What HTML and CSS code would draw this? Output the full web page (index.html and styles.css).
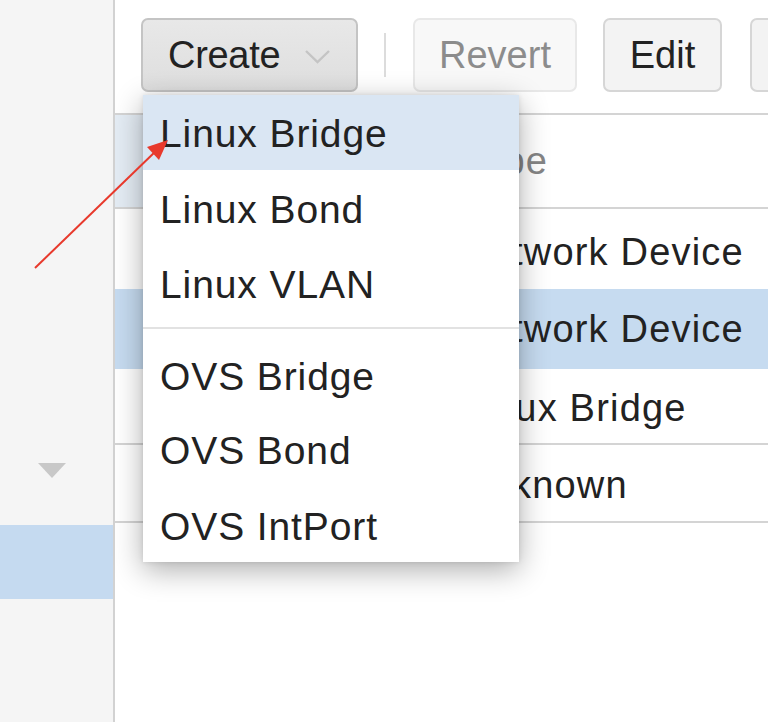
FILE: index.html
```html
<!DOCTYPE html>
<html>
<head>
<meta charset="utf-8">
<link rel="stylesheet" href="styles.css">
</head>
<body>
<div class="app">
  <aside class="sidebar">
    <div class="tri"></div>
    <div class="side-sel"></div>
  </aside>
  <main class="main">
    <div class="toolbar">
      <div class="create-wrap">
        <button class="btn btn-create"><span>Create</span>
          <svg class="chev" width="27" height="16" viewBox="0 0 27 16"><polyline points="2,3 13.5,14 25,3" fill="none" stroke="#c4c4c4" stroke-width="2.4"/></svg>
        </button>
        <div class="menu">
          <div class="item active">Linux Bridge</div>
          <div class="item">Linux Bond</div>
          <div class="item">Linux VLAN</div>
          <div class="sep"></div>
          <div class="item">OVS Bridge</div>
          <div class="item">OVS Bond</div>
          <div class="item last">OVS IntPort</div>
        </div>
      </div>
      <div class="vsep"></div>
      <button class="btn btn-disabled">Revert</button>
      <button class="btn btn-edit">Edit</button>
      <button class="btn btn-more"></button>
    </div>
    <div class="grid">
      <div class="row head">
        <div class="c1 hl"></div>
        <div class="c2">Type</div>
      </div>
      <div class="row r1">
        <div class="c1"></div>
        <div class="c2">Network Device</div>
      </div>
      <div class="row r2 sel">
        <div class="c1"></div>
        <div class="c2">Network Device</div>
      </div>
      <div class="row r3">
        <div class="c1"></div>
        <div class="c2">Linux Bridge</div>
      </div>
      <div class="row r4">
        <div class="c1"></div>
        <div class="c2">Unknown</div>
      </div>
    </div>
  </main>
</div>
<svg class="arrow" width="200" height="300" viewBox="0 0 200 300">
  <line x1="35" y1="268" x2="158" y2="149" stroke="#e8392c" stroke-width="2"/>
  <polygon points="168,140 147,147 159,160" fill="#e8392c"/>
</svg>
</body>
</html>
```

FILE: styles.css
```css
* { box-sizing: border-box; }
html, body { margin: 0; padding: 0; }
body {
  width: 768px;
  height: 722px;
  overflow: hidden;
  background: #fff;
  font-family: "Liberation Sans", "Helvetica Neue", Arial, sans-serif;
  color: #222;
  position: relative;
}
.app { display: flex; height: 722px; }
.sidebar {
  width: 115px;
  flex: none;
  background: #f5f5f5;
  border-right: 2px solid #d2d2d2;
  display: flex;
  flex-direction: column;
}
.tri {
  width: 0; height: 0;
  margin: 463px 0 0 38px;
  border-left: 14px solid transparent;
  border-right: 14px solid transparent;
  border-top: 15px solid #c8c8c8;
}
.side-sel {
  margin-top: 47px;
  height: 74px;
  background: #c5daf0;
}
.main { flex: 1; display: flex; flex-direction: column; min-width: 0; }
.toolbar {
  display: flex;
  padding: 18px 0 0 26px;
  height: 113px;
  align-items: flex-start;
  white-space: nowrap;
  position: relative;
  z-index: 2;
}
.btn {
  font-family: inherit;
  font-size: 38px;
  height: 74px;
  border-radius: 7px;
  padding: 0 26px;
  display: flex;
  align-items: center;
  flex: none;
  margin: 0;
}
.create-wrap { position: relative; flex: none; }
.btn-create {
  width: 217px;
  padding-left: 25px;
  background: linear-gradient(#e8e8e8, #dedede);
  border: 2px solid #c4c4c4;
  color: #222;
  justify-content: flex-start;
  letter-spacing: -0.3px;
}
.chev { margin-left: 24px; margin-top: 2px; flex: none; width: 27px; height: 16px; }
.vsep {
  width: 2px;
  height: 44px;
  background: #dcdcdc;
  margin: 15px 27px 0 26px;
  flex: none;
}
.btn-disabled {
  width: 164px;
  background: #f8f8f8;
  border: 2px solid #e8e8e8;
  color: #8c8c8c;
  justify-content: center;
}
.btn-edit {
  margin-left: 26px;
  width: 119px;
  background: #f3f3f3;
  border: 2px solid #d6d6d6;
  color: #222;
  justify-content: center;
}
.btn-more {
  margin-left: 28px;
  width: 100px;
  background: #f3f3f3;
  border: 2px solid #d6d6d6;
}
.menu {
  position: absolute;
  left: 2px;
  top: 77px;
  width: 376px;
  background: #fff;
  box-shadow: 0 8px 28px rgba(0,0,0,0.32), 0 0 5px rgba(0,0,0,0.1);
  z-index: 50;
}
.item {
  height: 75px;
  font-size: 39px;
  line-height: 80px;
  padding-left: 17px;
  color: #222;
  letter-spacing: 0.9px;
}
.item.active { background: #dae6f3; line-height: 78px; }
.sep + .item, .sep + .item + .item { height: 74px; line-height: 78px; }
.item.last { height: 76px; line-height: 81px; }
.sep {
  height: 18px;
  position: relative;
}
.sep::after {
  content: "";
  position: absolute;
  left: 0; right: 0; top: 7px;
  height: 2px;
  background: #e2e2e2;
}
.grid { border-top: 2px solid #d4d4d4; position: relative; z-index: 1; }
.row {
  display: flex;
  font-size: 38px;
  align-items: center;
  white-space: nowrap;
}
.c1 { width: 346px; flex: none; align-self: stretch; }
.c2 { letter-spacing: 1.2px; }
.head { height: 94px; color: #858585; border-bottom: 2px solid #d4d4d4; }
.hl { background: #e4ecf4; }
.r1 { height: 80px; padding-top: 6px; }
.r2 { height: 80px; }
.r3 { height: 76px; padding-top: 4px; border-bottom: 2px solid #d4d4d4; }
.r4 { height: 78px; padding-top: 5px; border-bottom: 2px solid #d4d4d4; }
.sel { background: #c6dbf0; }
.arrow { position: absolute; left: 0; top: 0; z-index: 100; }
```
